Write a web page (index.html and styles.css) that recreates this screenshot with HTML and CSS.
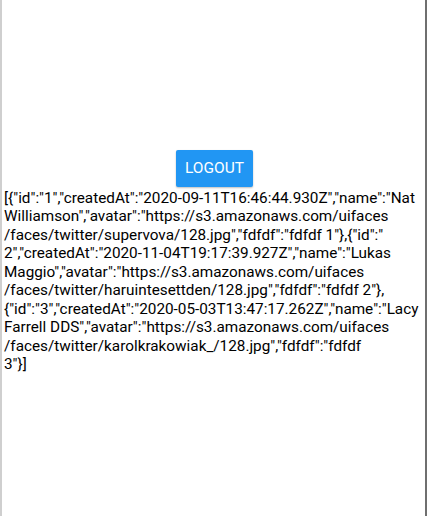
FILE: index.html
```html
<!DOCTYPE html>
<html>
<head>
    <link rel="stylesheet" href="styles.css">
</head>
<body>

<div class="screen">
    <button class="logout-button">Logout</button>
    <div class="json-text">[{"id":"1","createdAt":"2020-09-11T16:46:44.930Z","name":"Nat<br>Williamson","avatar":"https://s3.amazonaws.com/uifaces<br>/faces/twitter/supervova/128.jpg","fdfdf":"fdfdf 1"},{"id":"<br>2","createdAt":"2020-11-04T19:17:39.927Z","name":"Lukas<br>Maggio","avatar":"https://s3.amazonaws.com/uifaces<br>/faces/twitter/haruintesettden/128.jpg","fdfdf":"fdfdf 2"},<br>{"id":"3","createdAt":"2020-05-03T13:47:17.262Z","name":"Lacy<br>Farrell DDS","avatar":"https://s3.amazonaws.com/uifaces<br>/faces/twitter/karolkrakowiak_/128.jpg","fdfdf":"fdfdf<br>3"}]</div>
</div>

</body>
</html>
```

FILE: styles.css
```css
body, html {
    height: 100%;
    margin: 0;
    font-family: Roboto, "Noto Sans", sans-serif;
    background-color: #ffffff;
}

.screen {
    box-sizing: border-box;
    height: 100%;
    display: flex;
    flex-direction: column;
    justify-content: center;
    align-items: center;
    border-left: 2px solid #cfcfcf;
    border-right: 2px solid #6f6f6f;
    padding-left: 2px;
    padding-top: 7px;
}

.logout-button {
    background-color: #2196f3;
    color: #ffffff;
    border: none;
    border-radius: 2px;
    padding: 0 9px;
    height: 37px;
    font-family: Roboto, sans-serif;
    font-size: 15.5px;
    font-weight: 400;
    text-transform: uppercase;
    box-shadow: 0 1px 2px rgba(0, 0, 0, 0.25);
    cursor: pointer;
}

.json-text {
    align-self: stretch;
    margin-top: 2px;
    font-size: 15.3px;
    line-height: 18.5px;
    color: #000000;
    white-space: nowrap;
}
```
